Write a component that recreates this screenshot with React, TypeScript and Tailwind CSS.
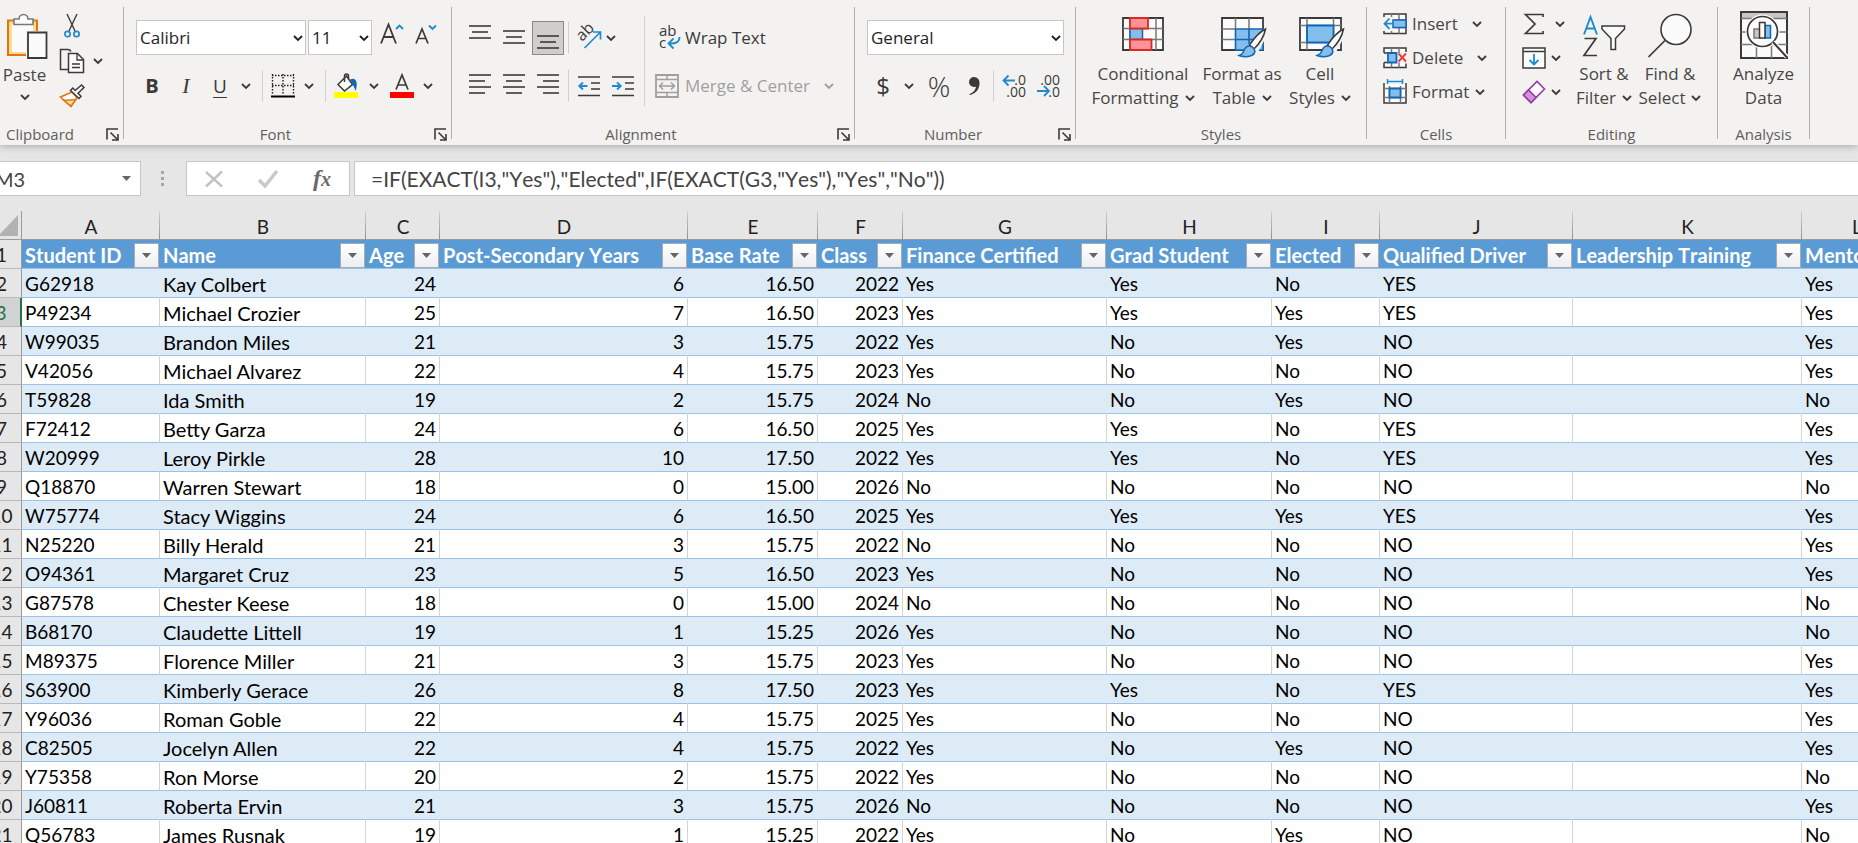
import React, { ReactNode } from "react";

const ink = "#3b3a39";
const blue = "#1e8bcd";

function Svg({ w, h, children }: { w: number; h: number; children: ReactNode }) {
  return (
    <svg
      width={w}
      height={h}
      viewBox={`0 0 ${w} ${h}`}
      fill="none"
      stroke={ink}
      strokeWidth="1.5"
      className="shrink-0 overflow-visible"
      aria-hidden="true"
    >
      {children}
    </svg>
  );
}

function Chevron({ color = ink }: { color?: string }) {
  return (
    <Svg w={10} h={6}>
      <path d="M1 1l4 4 4-4" stroke={color} strokeWidth="1.8" />
    </Svg>
  );
}

function Tool({ label, size = "w-8 h-8", children, pressed }: { label: string; size?: string; children: ReactNode; pressed?: boolean }) {
  return (
    <button
      type="button"
      aria-label={label}
      className={`flex shrink-0 items-center justify-center ${size} ${pressed ? "border border-[#8a8886] bg-[#d0cecd]" : ""}`}
    >
      {children}
    </button>
  );
}

function Drop({ label, size = "w-5 h-8" }: { label: string; size?: string }) {
  return (
    <Tool label={label} size={size}>
      <Chevron />
    </Tool>
  );
}

function Rule({ margin = "mx-1" }: { margin?: string }) {
  return <span className={`h-8 w-px shrink-0 bg-[#d2d0ce] ${margin}`} />;
}

function Group({ name, width, launcher, children }: { name: string; width: string; launcher?: boolean; children: ReactNode }) {
  return (
    <section aria-label={name} className={`flex h-full shrink-0 pt-[7px] ${width}`}>
      <div className="flex min-w-0 flex-1 flex-col">
        <div className="flex-1">{children}</div>
        <div className="flex h-[22px] items-center">
          <h2 className="flex-1 text-center text-[15px] leading-5 text-[#605e5c]">{name}</h2>
          {launcher && (
            <button type="button" aria-label={`${name} settings`} className="flex w-6 items-center justify-end pr-1">
              <Svg w={13} h={13}>
                <path d="M1 11.500V1h11M4.500 4.500l7 7M12 6v6H6" stroke={ink} strokeWidth="1.6" />
              </Svg>
            </button>
          )}
        </div>
      </div>
      <span className="h-[132px] w-px bg-[#b3b0ad]" />
    </section>
  );
}

function Choice({ label, value, options, width }: { label: string; value: string; options: string[]; width: string }) {
  return (
    <label className={`relative block h-[35px] shrink-0 ${width}`}>
      <select
        aria-label={label}
        defaultValue={value}
        className="h-full w-full appearance-none border border-[#c8c6c4] bg-white pl-[3px] text-[17px] text-[#252423]"
      >
        {options.map((o) => (
          <option key={o}>{o}</option>
        ))}
      </select>
      <span className="pointer-events-none absolute right-[3px] top-[15px]">
        <Chevron color="#201f1e" />
      </span>
    </label>
  );
}

function Big({ width, icon, top, bottom, drop = true }: { width: string; icon: ReactNode; top: string; bottom: string; drop?: boolean }) {
  return (
    <button type="button" className={`flex shrink-0 flex-col items-center text-[17px] leading-6 text-[#484644] ${width}`}>
      <span className="flex h-[55px] items-center">{icon}</span>
      <span className="whitespace-nowrap">{top}</span>
      <span className="flex items-center gap-1.5 whitespace-nowrap">
        {bottom}
        {drop && <Chevron />}
      </span>
    </button>
  );
}

function Lines({ rows }: { rows: [number, number, number][] }) {
  return (
    <Svg w={22} h={22}>
      {rows.map(([x1, x2, y]) => (
        <path key={y} d={`M${x1} ${y}H${x2}`} strokeWidth="1.6" />
      ))}
    </Svg>
  );
}

const PasteIcon = () => (
  <Svg w={42} h={46}>
    <path d="M2 7.500h29V42H2z" fill="#fcdc93" stroke="#e3730e" strokeWidth="2" />
    <path d="M6 11h21v28H6z" fill="#fbfbfb" stroke="none" />
    <path d="M20 18h22v28H20z" fill="#f3f2f1" stroke="none" />
    <path d="M8 11.500V6h5a4.500 4.500 0 0 1 9 0h5v5.500z" fill="#fbfbfb" stroke="#7a7876" strokeWidth="1.6" />
    <path d="M22 19.500h18.500v25.500H22z" fill="#fbfbfb" stroke={ink} strokeWidth="1.8" />
  </Svg>
);

const CutIcon = () => (
  <Svg w={18} h={26}>
    <path d="M4 1l8 17M14 1L6 18" strokeWidth="1.4" />
    <circle cx="4.500" cy="21" r="2.700" stroke={blue} strokeWidth="1.7" />
    <circle cx="13.500" cy="21" r="2.700" stroke={blue} strokeWidth="1.7" />
  </Svg>
);

const CopyIcon = () => (
  <Svg w={26} h={26}>
    <path d="M9 21.500H1.500v-20H9q2 0 3 2" fill="none" />
    <path d="M9.500 5.500h9l6 6V24.500h-15z" fill="#fbfbfb" />
    <path d="M18 5.500v6.500h6.500M13 16h8M13 19.500h8" strokeWidth="1.3" />
  </Svg>
);

const PainterIcon = () => (
  <Svg w={26} h={24}>
    <path d="M13 8l-11.500 5 10.500 9.500L18 13.500z" fill="#fbfbfb" stroke="#e3730e" strokeWidth="1.6" />
    <path d="M5 16.500l12-1-5 6.500z" fill="#fcdc93" stroke="#e3730e" strokeWidth="1.3" />
    <path d="M11.500 6.500l8.500 8 2-2.200-3-3 6-5.800-2.500-2.500-6.300 5.500L13.800 4z" fill="#fbfbfb" strokeWidth="1.5" />
  </Svg>
);

const BordersIcon = () => (
  <Svg w={24} h={24}>
    <path d="M1.500 0v21M12 0v21M22.500 0v21M1 1.500h22M1 11.500h22" stroke="#201f1e" strokeWidth="1.4" strokeDasharray="1.500 1.500" />
    <path d="M0 22.500h24" stroke="#000" strokeWidth="2" />
  </Svg>
);

const FillIcon = () => (
  <Svg w={26} h={26}>
    <path d="M5 11.500L13.500 3l6 8.500-8 6.500z" fill="#fbfbfb" />
    <path d="M11.500 9V3q0-2 2-2t2 2v3" />
    <path d="M18 7c4-2 6 2 4.500 8.500C21.500 13 20.500 11 18 7z" fill="#1267b4" stroke="#1267b4" />
    <path d="M1 19h24v6H1z" fill="#ff0" stroke="none" />
  </Svg>
);

const FontColorIcon = () => (
  <Svg w={26} h={26}>
    <path d="M7 16.500L13 2l6 14.500M9 12h8" strokeWidth="1.7" />
    <path d="M1 19h24v6H1z" fill="#f00" stroke="none" />
  </Svg>
);

const OrientationIcon = () => (
  <Svg w={26} h={26}>
    <text transform="translate(6 17) rotate(-45)" fill={ink} stroke="none" fontSize="16" fontFamily="Open Sans">
      ab
    </text>
    <path d="M8.500 23L24 7.500M17 7h7.500v7.500" stroke={blue} strokeWidth="1.7" />
  </Svg>
);

const WrapIcon = () => (
  <Svg w={22} h={26}>
    <text x="0" y="11" fill={ink} stroke="none" fontSize="15" fontFamily="Open Sans">
      ab
    </text>
    <text x="0" y="23" fill={ink} stroke="none" fontSize="15" fontFamily="Open Sans">
      c
    </text>
    <path d="M20.500 12c0 5-3 6.500-10.500 6.500M14.500 13.500l-5 5 5 5" stroke={blue} strokeWidth="1.8" />
  </Svg>
);

const MergeIcon = () => (
  <Svg w={24} h={24}>
    <g stroke="#a19f9d">
      <path d="M1 1h22v22H1z" strokeWidth="1.8" />
      <path d="M1 5.500h22M1 18.500h22M12 1v4.500M12 18.500V23M4.500 12h15M8 8.500L4.500 12 8 15.500M16 8.500l3.500 3.500-3.500 3.500" />
    </g>
  </Svg>
);

function IndentIcon({ out }: { out?: boolean }) {
  return (
    <Svg w={22} h={22}>
      <path d="M0 2h22M13 8h9M13 14h9M0 20.500h22" strokeWidth="1.6" />
      <path d={out ? "M9.500 11H1M5 7.500L1.200 11 5 14.500" : "M0 11h8.500M5 7.500L8.800 11 5 14.500"} stroke={blue} strokeWidth="1.8" />
    </Svg>
  );
}

function DecimalIcon({ more }: { more?: boolean }) {
  return (
    <Svg w={24} h={26}>
      <g fill={ink} stroke="none" fontSize="14" fontFamily="Open Sans" textAnchor="end">
        <text x="24" y="12">{more ? ".0" : ".00"}</text>
        <text x="24" y="24">{more ? ".00" : ".0"}</text>
      </g>
      <path d={more ? "M13 7.500H1.500M6.500 2.500l-5 5 5 5" : "M1 18h12M8 13l5 5-5 5"} stroke={blue} strokeWidth="1.8" />
    </Svg>
  );
}

const Brush = ({ x }: { x: number }) => (
  <g transform={`translate(${x} 0)`}>
    <path d="M32 12L16 28l-5 9h14l8-15z" fill="#f3f2f1" stroke="none" />
    <path d="M33.500 12c-6 3-12 10-16 16l4.500 4c5-5 10-12 11.500-20z" fill="#fbfbfb" strokeWidth="1.500" />
    <path d="M17 29c-4 0-4.500 4-6 6.500-1 2-3 2.500-4 3 6 2 13 1.500 15.500-2.500 1-3-1-7-5.500-7z" fill="#83beec" stroke="#1267b4" strokeWidth="1.500" />
  </g>
);

const ConditionalIcon = () => (
  <Svg w={42} h={36}>
    <path d="M1 1h40v32H1z" fill="#fbfbfb" strokeWidth="1.8" />
    <path d="M1 11.500h40M1 22.500h40M8 1v32M34 1v32" stroke="#7a7876" />
    <path d="M8 11.500h12.500v11H8z" fill="#83beec" stroke="#1267b4" />
    <path d="M8 1h18v10.500H8zM8 22.500h21.500V33H8z" fill="#ff9199" stroke="#d92c20" strokeWidth="1.8" />
  </Svg>
);

const FormatTableIcon = () => (
  <Svg w={42} h={36}>
    <path d="M1 1h41v32H1z" fill="#fbfbfb" strokeWidth="1.8" />
    <path d="M14.500 12H42v21H14.500z" fill="#83beec" stroke="none" />
    <path d="M1 12h13.500M1 22.500h13.500M14.500 1v11M28 1v11" stroke="#7a7876" />
    <path d="M14.500 12H42v21H14.500zM14.500 22.500H42M28 12v21" stroke="#1267b4" strokeWidth="1.6" />
    <Brush x={11} />
  </Svg>
);

const CellStylesIcon = () => (
  <Svg w={42} h={36}>
    <path d="M1 1h41v32H1z" fill="#fbfbfb" strokeWidth="1.8" />
    <path d="M1 8.500h41M1 25.500h41M8 1v32M34.500 1v32" stroke="#7a7876" />
    <path d="M8 8.500h26.500v17H8z" fill="#83beec" stroke="#1267b4" strokeWidth="1.8" />
    <Brush x={11} />
  </Svg>
);

const InsertIcon = () => (
  <Svg w={24} h={22}>
    <path d="M1 1h22v19.500H1z" fill="#fbfbfb" />
    <path d="M8.500 1v19.500M16 1v19.500M1 7h22M1 14.500h22" stroke="#7a7876" />
    <path d="M0 4h12v14H0z" fill="#f3f2f1" stroke="none" />
    <path d="M10 7h13v7.500H10z" fill="#83beec" stroke="#1267b4" />
    <path d="M11 10.700H1.500M6.500 5.500l-5 5.200 5 5.200" stroke={blue} strokeWidth="1.8" />
  </Svg>
);

const DeleteIcon = () => (
  <Svg w={24} h={22}>
    <path d="M1 6V1h22v4M1 15.500v5h22v-4M1 6h4M1 15.500h4" fill="#fbfbfb" />
    <path d="M8.500 1v5M16 1v5M8.500 15.500v5M16 15.500v5" stroke="#7a7876" />
    <path d="M5 6h8.500v9.500H5z" fill="#83beec" stroke="#1267b4" strokeWidth="1.8" />
    <path d="M15.500 6.500l7.500 8M23 6.500l-7.500 8" stroke="#e8413c" strokeWidth="1.900" />
  </Svg>
);

const FormatIcon = () => (
  <Svg w={24} h={24}>
    <path d="M1 3v20h22V3" fill="#fbfbfb" />
    <path d="M6.500 6v17M17.500 6v17M1 8.500h22M1 17.500h22" stroke="#7a7876" />
    <path d="M6.500 8.500h11v9h-11z" fill="#83beec" stroke="#1267b4" strokeWidth="1.8" />
    <path d="M4 0h16v4.500H4z" fill="#f3f2f1" stroke="none" />
    <path d="M4.500 1.500h15M4.500 -1v5M19.500 -1v5" stroke={blue} />
  </Svg>
);

const SumIcon = () => (
  <Svg w={20} h={22}>
    <path d="M19 4V1.500H1.500L11 11l-9.500 9.500H19V18" strokeWidth="1.7" />
  </Svg>
);

const FillDownIcon = () => (
  <Svg w={24} h={22}>
    <path d="M1 1h22v20H1zM1 4.500h22" fill="#fbfbfb" />
    <path d="M12 7v10.500M7.500 13l4.500 4.500 4.500-4.500" stroke={blue} strokeWidth="1.8" />
  </Svg>
);

const ClearIcon = () => (
  <Svg w={24} h={24}>
    <path d="M1.500 15L15 1.500l7.500 7.500L9 22.500z" fill="#fbfbfb" stroke="#953da5" strokeWidth="1.6" />
    <path d="M1.500 15l5-5L14 17.500l-5 5z" fill="#d492dc" stroke="#953da5" strokeWidth="1.6" />
  </Svg>
);

const SortIcon = () => (
  <Svg w={44} h={36}>
    <path d="M2 17.500L8.500 0 15 17.500M4.300 11.500h8.400" stroke={blue} strokeWidth="1.900" />
    <path d="M2.500 21.500h11.500L2 38.500h13" strokeWidth="1.700" />
    <path d="M20 9h22.500v3l-9 9.500v11h-4.500v-11L20 12z" fill="#fbfbfb" />
  </Svg>
);

const FindIcon = () => (
  <Svg w={46} h={44}>
    <circle cx="29" cy="16.500" r="15" fill="#fbfbfb" strokeWidth="1.6" />
    <path d="M18 27.500L1.500 44" strokeWidth="1.7" />
  </Svg>
);

const AnalyzeIcon = () => (
  <Svg w={48} h={48}>
    <path d="M1 1h46v46H1z" fill="#fbfbfb" strokeWidth="2" />
    <path d="M2 2h44v5H2z" fill="#c8c6c4" stroke="none" />
    <path d="M1 7.500h46M1 21h46M1 33.500h46M16.500 33v14M31.500 33v14" stroke="#7a7876" />
    <circle cx="22.500" cy="20.500" r="17" fill="#fbfbfb" stroke="none" />
    <circle cx="22.500" cy="20.500" r="15" fill="#fbfbfb" strokeWidth="1.7" />
    <path d="M33 31l14 15" stroke="#fbfbfb" strokeWidth="4.500" />
    <path d="M33 31l14 15.500" strokeWidth="1.900" />
    <path d="M14 18h6v9h-6z" fill="#c8c6c4" stroke="#7a7876" />
    <path d="M25 14.500h5.500V27H25z" fill="#83beec" stroke="#1267b4" />
    <path d="M19.500 11.500h5.500V27h-5.500z" fill="#fbfbfb" />
  </Svg>
);

function CellTool({ icon, label, gap }: { icon: ReactNode; label: string; gap: string }) {
  return (
    <button type="button" className={`flex h-[34px] items-center text-[17px] text-[#484644] ${gap}`}>
      <span className="flex items-center gap-[5px]">
        {icon}
        {label}
      </span>
      <Chevron />
    </button>
  );
}

function Ribbon() {
  return (
    <header className="relative z-10 flex h-[145px] shrink-0 overflow-hidden bg-[#f3f2f1] shadow-[0_1px_8px_rgba(0,0,0,0.28)]">
      <Group name="Clipboard" width="w-[143px] -ml-[19px]" launcher>
        <div className="flex pl-5">
          <button type="button" className="mr-1.5 flex w-[47px] flex-col items-center pt-1.5 text-[17px] leading-6 text-[#484644]">
            <span className="pl-1">
              <PasteIcon />
            </span>
            <span className="mt-1">Paste</span>
            <span className="flex h-5 items-center">
              <Chevron />
            </span>
          </button>
          <div className="flex flex-col pt-0.5">
            <Tool label="Cut" size="w-9 h-[34px]">
              <CutIcon />
            </Tool>
            <div className="flex h-[36px] items-center">
              <Tool label="Copy" size="w-9 h-8">
                <CopyIcon />
              </Tool>
              <Drop label="Copy options" size="w-4 h-8" />
            </div>
            <Tool label="Format painter" size="w-9 h-[34px]">
              <PainterIcon />
            </Tool>
          </div>
        </div>
      </Group>

      <Group name="Font" width="w-[328px]" launcher>
        <div className="flex flex-col gap-[15px] pl-3 pt-[13px]">
          <div className="flex items-center gap-0.5">
            <Choice label="Font name" value="Calibri" options={["Calibri", "Arial"]} width="w-[170px]" />
            <Choice label="Font size" value="11" options={["10", "11", "12"]} width="w-[64px]" />
            <Tool label="Increase font size" size="w-9 h-8">
              <Svg w={24} h={32}>
                <path d="M1 21.500L8.500 2.500 16 21.500M3.700 15h9.600" strokeWidth="1.8" />
                <path d="M16 7l3.500-3.500L23 7" stroke={blue} strokeWidth="1.900" />
              </Svg>
            </Tool>
            <Tool label="Decrease font size" size="w-7 h-8">
              <Svg w={22} h={32}>
                <path d="M1 21.500L7 7l6 14.500M3 16.500h8" strokeWidth="1.7" />
                <path d="M14 3.500L17.500 7 21 3.500" stroke={blue} strokeWidth="1.900" />
              </Svg>
            </Tool>
          </div>
          <div className="flex items-center text-xl text-[#3b3a39]">
            <Tool label="Bold">
              <b>B</b>
            </Tool>
            <Tool label="Italic" size="w-9 h-8">
              <i className="font-['Liberation_Serif',serif] text-[22px]">I</i>
            </Tool>
            <Tool label="Underline">
              <span className="text-[19px] underline underline-offset-4">U</span>
            </Tool>
            <Drop label="Underline options" />
            <Rule margin="ml-1.5 mr-1" />
            <Tool label="Borders">
              <BordersIcon />
            </Tool>
            <Drop label="Border options" />
            <Rule margin="ml-1.5 mr-1" />
            <Tool label="Fill color">
              <FillIcon />
            </Tool>
            <Drop label="Fill options" size="w-6 h-8" />
            <Tool label="Font color">
              <FontColorIcon />
            </Tool>
            <Drop label="Font color options" />
          </div>
        </div>
      </Group>

      <Group name="Alignment" width="w-[403px]" launcher>
        <div className="flex pl-3 pt-[9px]">
          <div className="flex w-[181px] flex-col gap-[15px] border-r border-[#d2d0ce] pb-1 pt-1">
            <div className="flex h-[35px] items-center">
              <div className="flex items-center gap-0.5">
                <Tool label="Top align">
                  <Lines rows={[[0, 22, -1], [3, 19, 5], [0, 22, 11]]} />
                </Tool>
                <Tool label="Middle align">
                  <Lines rows={[[0, 22, 4], [3, 19, 10], [0, 22, 16]]} />
                </Tool>
                <Tool label="Bottom align" size="w-8 h-[34px]" pressed>
                  <Lines rows={[[0, 22, 9], [3, 19, 15], [0, 22, 21]]} />
                </Tool>
              </div>
              <Rule />
              <Tool label="Orientation">
                <OrientationIcon />
              </Tool>
              <Drop label="Orientation options" size="w-3 h-8" />
            </div>
            <div className="flex items-center">
              <div className="flex items-center gap-0.5">
                <Tool label="Align left">
                  <Lines rows={[[0, 22, 0], [0, 16, 6], [0, 22, 12], [0, 16, 18]]} />
                </Tool>
                <Tool label="Center">
                  <Lines rows={[[0, 22, 0], [3, 19, 6], [0, 22, 12], [3, 19, 18]]} />
                </Tool>
                <Tool label="Align right">
                  <Lines rows={[[0, 22, 0], [6, 22, 6], [0, 22, 12], [6, 22, 18]]} />
                </Tool>
              </div>
              <Rule />
              <div className="flex items-center gap-0.5">
                <Tool label="Decrease indent">
                  <IndentIcon out />
                </Tool>
                <Tool label="Increase indent">
                  <IndentIcon />
                </Tool>
              </div>
            </div>
          </div>
          <div className="flex flex-col gap-[15px] pl-2.5 pt-1 text-[17px]">
            <button type="button" className="flex h-[35px] items-center gap-1 pl-1 text-[#3b3a39]">
              <WrapIcon />
              Wrap Text
            </button>
            <button type="button" disabled className="flex h-8 items-center gap-1.5 text-[#a19f9d]">
              <MergeIcon />
              Merge &amp; Center
              <span className="pl-2">
                <Chevron color="#a19f9d" />
              </span>
            </button>
          </div>
        </div>
      </Group>

      <Group name="Number" width="w-[221px]" launcher>
        <div className="flex flex-col gap-[15px] pl-3 pt-[13px]">
          <Choice label="Number format" value="General" options={["General", "Number", "Text"]} width="w-[197px]" />
          <div className="flex items-center text-2xl text-[#3b3a39]">
            <Tool label="Currency">$</Tool>
            <Drop label="Currency options" />
            <Tool label="Percent" size="w-10 h-8">
              <span className="text-[28px] font-light leading-8">%</span>
            </Tool>
            <Tool label="Comma style" size="w-[30px] h-8">
              <Svg w={12} h={20}>
                <path d="M6 1a5 5 0 0 0 0 10q1 0 2-.5C7.500 14 5 17 1.500 18v1C8 18 11.500 13 11.500 7A5.500 5.500 0 0 0 6 1z" fill={ink} stroke="none" />
              </Svg>
            </Tool>
            <Rule />
            <Tool label="Increase decimal">
              <DecimalIcon more />
            </Tool>
            <Tool label="Decrease decimal" size="w-9 h-8">
              <DecimalIcon />
            </Tool>
          </div>
        </div>
      </Group>

      <Group name="Styles" width="w-[291px]">
        <div className="flex pl-3">
          <Big width="w-[110px]" icon={<ConditionalIcon />} top="Conditional" bottom="Formatting" />
          <Big width="w-[88px]" icon={<FormatTableIcon />} top="Format as" bottom="Table" />
          <Big width="w-[68px]" icon={<CellStylesIcon />} top="Cell" bottom="Styles" />
        </div>
      </Group>

      <Group name="Cells" width="w-[139px]">
        <div className="flex flex-col items-start pl-4">
          <CellTool icon={<InsertIcon />} label="Insert" gap="gap-3.5" />
          <CellTool icon={<DeleteIcon />} label="Delete" gap="gap-3.5" />
          <CellTool icon={<FormatIcon />} label="Format" gap="gap-1.5" />
        </div>
      </Group>

      <Group name="Editing" width="w-[212px]">
        <div className="flex">
          <div className="flex w-[60px] flex-col pl-3">
            <div className="flex">
              <Tool label="AutoSum" size="w-8 h-[34px]">
                <SumIcon />
              </Tool>
              <Drop label="AutoSum options" size="w-5 h-[34px]" />
            </div>
            <div className="flex">
              <Tool label="Fill" size="w-8 h-[34px]">
                <FillDownIcon />
              </Tool>
              <Drop label="Fill options" size="w-3 h-[34px]" />
            </div>
            <div className="flex">
              <Tool label="Clear" size="w-8 h-[34px]">
                <ClearIcon />
              </Tool>
              <Drop label="Clear options" size="w-3 h-[34px]" />
            </div>
          </div>
          <Big width="w-[68px] ml-1" icon={<SortIcon />} top="Sort &amp;" bottom="Filter" />
          <Big width="w-[64px]" icon={<FindIcon />} top="Find &amp;" bottom="Select" />
        </div>
      </Group>

      <Group name="Analysis" width="w-[92px]">
        <Big width="w-full" icon={<AnalyzeIcon />} top="Analyze" bottom="Data" drop={false} />
      </Group>
    </header>
  );
}

function FormulaBar() {
  return (
    <div className="flex h-[66px] shrink-0 items-start pt-4 text-[21px] text-[#444] [font-kerning:none]">
      <div className="-ml-5 flex h-[35px] w-[161px] shrink-0 items-center border border-[#c6c6c6] bg-white">
        <input aria-label="Name box" defaultValue="M3" className="h-full min-w-0 flex-1 bg-transparent pl-3.5 text-xl outline-none" />
        <button type="button" aria-label="Names" className="flex w-7 justify-center">
          <Triangle />
        </button>
      </div>
      <div className="flex h-[35px] w-[43px] shrink-0 flex-col items-center justify-center gap-[3px]">
        <span className="size-[3px] bg-[#a6a6a6]" />
        <span className="size-[3px] bg-[#a6a6a6]" />
        <span className="size-[3px] bg-[#a6a6a6]" />
      </div>
      <div className="ml-0.5 mr-1 flex h-[35px] w-[164px] shrink-0 items-center border border-[#c6c6c6] bg-white">
        <Tool label="Cancel" size="w-[54px] h-8">
          <Svg w={18} h={16}>
            <path d="M1 1l16 14.500M17 0.500L1 15.500" stroke="#c2c2c2" strokeWidth="2.400" />
          </Svg>
        </Tool>
        <Tool label="Enter" size="w-[54px] h-8">
          <Svg w={20} h={18}>
            <path d="M1 10l6 6L19 1" stroke="#c8c8c8" strokeWidth="3.500" />
          </Svg>
        </Tool>
        <Tool label="Insert function" size="w-[54px] h-8">
          <span className="font-['Liberation_Serif',serif] text-2xl font-bold italic leading-6 text-[#6a6a6a]">
            f<span className="text-xl">x</span>
          </span>
        </Tool>
      </div>
      <input
        aria-label="Formula bar"
        defaultValue={'=IF(EXACT(I3,"Yes"),"Elected",IF(EXACT(G3,"Yes"),"Yes","No"))'}
        className="h-[35px] min-w-0 flex-1 border border-r-0 border-[#c6c6c6] bg-white pl-4 outline-none"
      />
    </div>
  );
}

function Triangle() {
  return (
    <Svg w={9} h={5}>
      <path d="M0 0h9L4.500 5z" fill="#666" stroke="none" />
    </Svg>
  );
}

type Column = { letter: string; title: string; width: string; style?: string };

const columns: Column[] = [
  { letter: "A", title: "Student ID", width: "w-[138px]" },
  { letter: "B", title: "Name", width: "w-[206px]", style: "text-xl leading-[26px]" },
  { letter: "C", title: "Age", width: "w-[74px]", style: "text-right" },
  { letter: "D", title: "Post-Secondary Years", width: "w-[248px]", style: "text-right" },
  { letter: "E", title: "Base Rate", width: "w-[130px]", style: "text-right" },
  { letter: "F", title: "Class", width: "w-[85px]", style: "text-right" },
  { letter: "G", title: "Finance Certified", width: "w-[204px]" },
  { letter: "H", title: "Grad Student", width: "w-[165px]" },
  { letter: "I", title: "Elected", width: "w-[108px]" },
  { letter: "J", title: "Qualified Driver", width: "w-[193px]" },
  { letter: "K", title: "Leadership Training", width: "w-[229px]" },
  { letter: "L", title: "Mentor", width: "w-[110px]" },
];

const rows = [
  ["G62918", "Kay Colbert", "24", "6", "16.50", "2022", "Yes", "Yes", "No", "YES", "", "Yes"],
  ["P49234", "Michael Crozier", "25", "7", "16.50", "2023", "Yes", "Yes", "Yes", "YES", "", "Yes"],
  ["W99035", "Brandon Miles", "21", "3", "15.75", "2022", "Yes", "No", "Yes", "NO", "", "Yes"],
  ["V42056", "Michael Alvarez", "22", "4", "15.75", "2023", "Yes", "No", "No", "NO", "", "Yes"],
  ["T59828", "Ida Smith", "19", "2", "15.75", "2024", "No", "No", "Yes", "NO", "", "No"],
  ["F72412", "Betty Garza", "24", "6", "16.50", "2025", "Yes", "Yes", "No", "YES", "", "Yes"],
  ["W20999", "Leroy Pirkle", "28", "10", "17.50", "2022", "Yes", "Yes", "No", "YES", "", "Yes"],
  ["Q18870", "Warren Stewart", "18", "0", "15.00", "2026", "No", "No", "No", "NO", "", "No"],
  ["W75774", "Stacy Wiggins", "24", "6", "16.50", "2025", "Yes", "Yes", "Yes", "YES", "", "Yes"],
  ["N25220", "Billy Herald", "21", "3", "15.75", "2022", "No", "No", "No", "NO", "", "Yes"],
  ["O94361", "Margaret Cruz", "23", "5", "16.50", "2023", "Yes", "No", "No", "NO", "", "Yes"],
  ["G87578", "Chester Keese", "18", "0", "15.00", "2024", "No", "No", "No", "NO", "", "No"],
  ["B68170", "Claudette Littell", "19", "1", "15.25", "2026", "Yes", "No", "No", "NO", "", "No"],
  ["M89375", "Florence Miller", "21", "3", "15.75", "2023", "Yes", "No", "No", "NO", "", "Yes"],
  ["S63900", "Kimberly Gerace", "26", "8", "17.50", "2023", "Yes", "Yes", "No", "YES", "", "Yes"],
  ["Y96036", "Roman Goble", "22", "4", "15.75", "2025", "Yes", "No", "No", "NO", "", "Yes"],
  ["C82505", "Jocelyn Allen", "22", "4", "15.75", "2022", "Yes", "No", "Yes", "NO", "", "Yes"],
  ["Y75358", "Ron Morse", "20", "2", "15.75", "2022", "Yes", "No", "No", "NO", "", "No"],
  ["J60811", "Roberta Ervin", "21", "3", "15.75", "2026", "No", "No", "No", "NO", "", "Yes"],
  ["Q56783", "James Rusnak", "19", "1", "15.25", "2022", "Yes", "No", "Yes", "NO", "", "No"],
];

function Sheet() {
  return (
    <main className="min-h-0 flex-1 overflow-hidden">
      <table className="-ml-[18px] w-[1930px] table-fixed border-separate border-spacing-0 text-[19px] leading-[26px] text-black">
        <colgroup>
          <col className="w-10" />
          {columns.map((c) => (
            <col key={c.letter} className={c.width} />
          ))}
        </colgroup>
        <thead>
          <tr className="h-[29px]">
            <th scope="col" aria-label="Select all" className="border-b border-r border-[#9b9b9b] p-0 align-bottom">
              <span className="flex justify-end pb-[3px] pr-[3px]">
                <Svg w={20} h={21}>
                  <path d="M20 0v21H0z" fill="#b2b2b2" stroke="none" />
                </Svg>
              </span>
            </th>
            {columns.map((c) => (
              <th
                key={c.letter}
                scope="col"
                className="border-b border-[#9b9b9b] bg-[linear-gradient(to_bottom,#d0d0d0,#909090)] bg-[length:1px_100%] bg-right bg-no-repeat px-0 pb-0 pt-1 text-center font-normal leading-6 text-[#222]"
              >
                {c.letter}
              </th>
            ))}
          </tr>
        </thead>
        <tbody>
          <tr className="h-[29px]">
            <th scope="row" className="border-b border-r border-b-[#b8b8b8] border-r-[#9b9b9b] px-0 pb-0 pt-0.5 text-center font-normal text-[#222]">
              1
            </th>
            {columns.map((c) => (
              <td key={c.letter} className="border-b border-[#9bc2e6] bg-[#5b9bd5] px-0 pb-0 pt-0.5 font-bold text-white">
                <div className="flex items-center justify-between pl-[3px] pr-px">
                  <span className="whitespace-nowrap text-xl leading-[26px] [font-kerning:none]">{c.title}</span>
                  <button
                    type="button"
                    aria-label={`Filter ${c.title}`}
                    className="flex size-[25px] shrink-0 items-center justify-center border border-[#ababab] bg-linear-to-b from-white to-[#eceef2]"
                  >
                    <Triangle />
                  </button>
                </div>
              </td>
            ))}
          </tr>
          {rows.map((row, r) => (
            <tr key={row[0]} className={`h-[29px] ${r % 2 === 0 ? "bg-[#ddebf7]" : "bg-white"}`}>
              <th
                scope="row"
                className={
                  r === 1
                    ? "border-b border-r-2 border-b-[#b8b8b8] border-r-[#217346] bg-[#d2d2d2] px-0 pb-0 pt-0.5 text-center font-normal text-[#217346]"
                    : "border-b border-r border-b-[#b8b8b8] border-r-[#9b9b9b] bg-[#e6e6e6] px-0 pb-0 pt-0.5 text-center font-normal text-[#222]"
                }
              >
                {r + 2}
              </th>
              {row.map((value, i) => (
                <td
                  key={columns[i].letter}
                  className={`overflow-hidden whitespace-nowrap border-b border-r border-b-[#9bc2e6] px-[3px] pb-0 pt-0.5 ${
                    r % 2 === 1 ? "border-r-[#d4d4d4]" : "border-r-transparent"
                  } ${columns[i].style ?? "text-left"}`}
                >
                  {value}
                </td>
              ))}
            </tr>
          ))}
        </tbody>
      </table>
    </main>
  );
}

export default function App() {
  return (
    <div className="flex h-screen flex-col overflow-hidden bg-[#e6e6e6] font-['Open_Sans','Noto_Sans',sans-serif]">
      <Ribbon />
      <div className="flex min-h-0 flex-1 flex-col font-[Lato,'Open_Sans',sans-serif]">
        <FormulaBar />
        <Sheet />
      </div>
    </div>
  );
}
